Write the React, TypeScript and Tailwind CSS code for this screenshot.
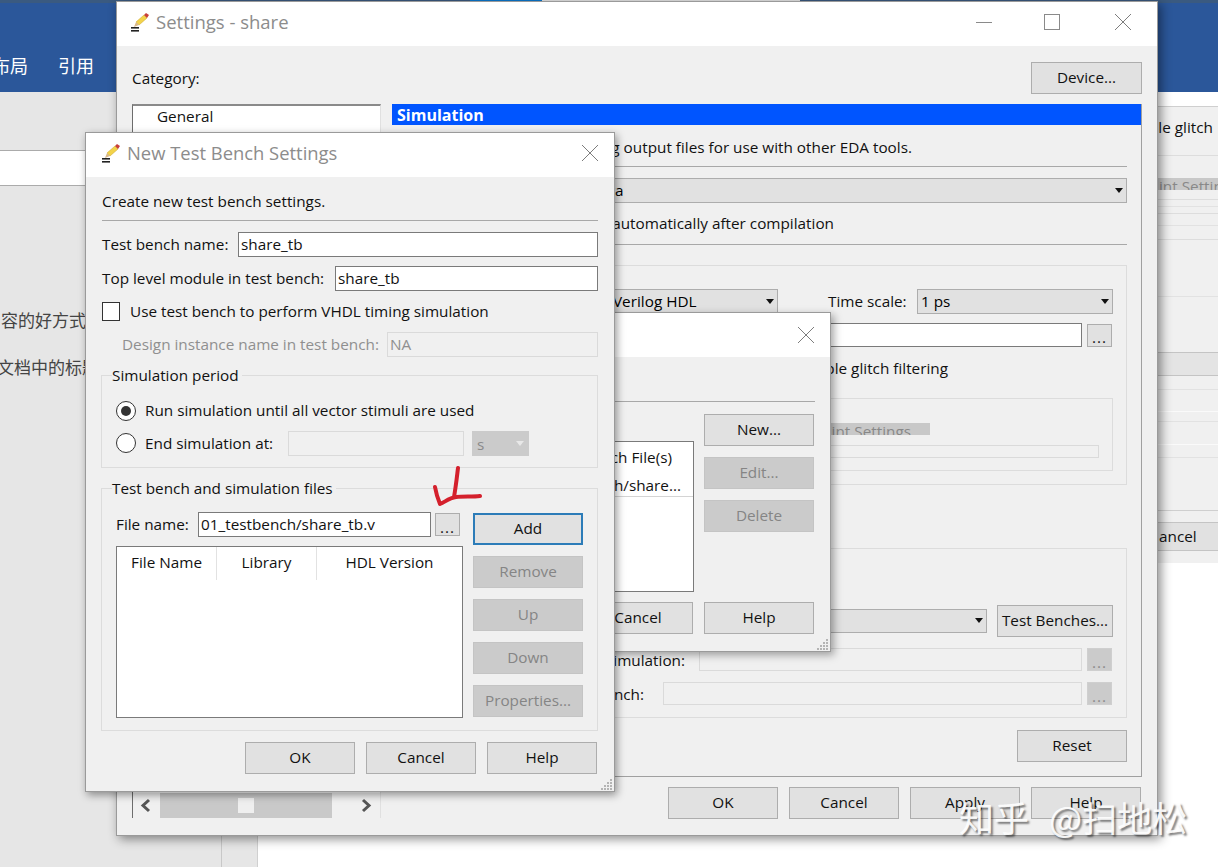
import React from "react";
import clsx from "clsx";

const Arrow = ({ color = "#111" }: { color?: string }) => (
  <svg width="8" height="5" viewBox="0 0 8 5" className="shrink-0"><polygon points="0,0 8,0 4,5" fill={color} /></svg>
);

const Btn = ({ children, disabled, focused, className }: { children: React.ReactNode; disabled?: boolean; focused?: boolean; className?: string }) => (
  <div
    className={clsx(
      "flex h-[32px] w-[110px] shrink-0 items-center justify-center whitespace-nowrap pb-[2px]",
      focused ? "border-2 border-[#2c7cb8] bg-[#e1e1e1] text-[#111]" : "border",
      !focused && (disabled ? "border-[#c4c4c4] bg-[#cbcbcb] text-[#858585]" : "border-[#adadad] bg-[#e1e1e1] text-[#111]"),
      className
    )}
  >
    {children}
  </div>
);

const Input = ({ value, className, disabled }: { value?: string; className?: string; disabled?: boolean }) => (
  <div
    className={clsx(
      "flex shrink-0 items-center overflow-hidden whitespace-nowrap border pb-[1px] pl-[2px]",
      disabled ? "border-[#dadada] bg-[#f0f0f0] text-[#8f8f8f]" : "border-[#7a7a7a] bg-white text-[#111]",
      className
    )}
  >
    {value}
  </div>
);

const Select = ({ value, className }: { value?: string; className?: string }) => (
  <div className={clsx("flex shrink-0 items-center justify-between overflow-hidden whitespace-nowrap border border-[#adadad] bg-[#e1e1e1] pb-[1px] pl-[3px] pr-[3px]", className)}>
    <span>{value}</span>
    <Arrow />
  </div>
);

const Dots = ({ disabled }: { disabled?: boolean }) => (
  <div
    className={clsx(
      "flex h-[23px] w-[25px] shrink-0 items-center justify-center border pt-[6px] leading-none tracking-[1px]",
      disabled ? "border-[#cfcfcf] bg-[#cbcbcb] text-[#8a8a8a]" : "border-[#adadad] bg-[#e1e1e1] text-[#111]"
    )}
  >
    ...
  </div>
);

const Pencil = () => (
  <svg width="18" height="19" viewBox="0 0 18 19" className="shrink-0">
    <polygon points="5,9 13,2 16,5 8,12" fill="#f3d34a" stroke="#c9a227" strokeWidth="0.5" />
    <polygon points="13,2 15,0 18,2 16,5" fill="#c8403a" />
    <polygon points="5,9 8,12 3,14" fill="#d9b98a" />
    <rect x="0" y="14" width="8" height="1.6" fill="#222" />
    <rect x="0" y="17" width="8" height="1.6" fill="#222" />
  </svg>
);

const Close = () => (
  <svg width="18" height="18" viewBox="0 0 18 18" className="shrink-0">
    <path d="M1 1 L17 17 M17 1 L1 17" stroke="#7d7d7d" strokeWidth="1" fill="none" />
  </svg>
);

const Grip = () => (
  <svg width="12" height="12" viewBox="0 0 12 12" className="absolute bottom-[1px] right-[1px]">
    {[[9, 1], [6, 4], [9, 4], [3, 7], [6, 7], [9, 7], [0, 10], [3, 10], [6, 10], [9, 10]].map(([x, y], i) => (
      <rect key={i} x={x} y={y} width="2" height="2" fill="#b4b4b4" />
    ))}
  </svg>
);

const Group = ({ legend, className, children }: { legend?: string; className?: string; children: React.ReactNode }) => (
  <div className={clsx("relative border border-[#dcdcdc]", className)}>
    {legend && <div className="absolute left-[10px] top-[-11px] whitespace-nowrap bg-[#f0f0f0] pr-[3px] text-[#111]">{legend}</div>}
    {children}
  </div>
);

const Backdrop = () => (
  <div className="absolute inset-0 flex flex-col bg-white">
    <div className="flex h-[92px] shrink-0 flex-col bg-[#2b579a]">
      <div className="flex h-[3px] shrink-0">
        <div className="w-[470px] bg-[#3a5a80]" />
        <div className="w-[72px] bg-[#0a78d0]" />
        <div className="w-[258px] bg-[#e8e8e8]" />
        <div className="flex-1 bg-[#3a5a80]" />
      </div>
      <div className="flex gap-[30px] pt-[50px] text-[18px] leading-[26px] text-white">
        <span className="-ml-[8px]">布局</span>
        <span>引用</span>
      </div>
    </div>
    <div className="flex flex-1">
      <div className="w-[222px] shrink-0 border-r border-[#c8c8c8] bg-[#e6e6e6] text-[17px] leading-[24px] text-[#444]">
        <div className="mt-[58px] h-[36px] border-y border-[#ababab] bg-white" />
        <div className="ml-[1px] mt-[123px]">容的好方式</div>
        <div className="-ml-[3px] mt-[23px]">文档中的标题</div>
      </div>
      <div className="w-[36px] shrink-0 border-r border-[#d0d0d0] bg-[#e6e6e6]" />
      <div className="flex-1" />
      <div className="flex w-[60px] shrink-0 flex-col">
        <div className="h-[14px] bg-white" />
        <div className="flex h-[457px] flex-col overflow-hidden border-t border-[#cfcfcf] bg-[#f0f0f0]">
          <div className="-ml-[9px] mt-[9px] whitespace-nowrap leading-[22px] text-[#111]">ble glitch</div>
          <div className="mt-[17px] border-t border-[#dddddd]" />
          <div className="mt-[22px] h-[12px] overflow-hidden whitespace-nowrap bg-[#c8c8c8] pl-[1px] leading-[16px] text-[#888]">int Settings</div>
          <div className="mt-[9px] border-t border-[#dddddd]" />
          <div className="mt-[6px] border-t border-[#e2e2e2]" />
          <div className="mt-[6px] border-t border-[#dddddd]" />
          <div className="mt-[11px] border-t border-[#e2e2e2]" />
          <div className="mt-[13px] border-t border-[#dddddd]" />
          <div className="mt-[56px] border-t border-[#e2e2e2]" />
          <div className="mt-[55px] h-[24px] border-y border-[#c4c4c4] bg-[#e4e4e4]" />
          <div className="mt-[13px] border-t border-[#e2e2e2]" />
          <div className="mt-[21px] border-t border-[#fafafa]" />
          <div className="mt-[9px] border-t border-[#e2e2e2]" />
          <div className="mt-[22px] border-t border-[#fafafa]" />
          <div className="mt-[12px] border-t border-[#e2e2e2]" />
          <div className="mt-[52px] border-t border-[#cfcfcf]" />
          <div className="mt-[11px] flex h-[29px] items-center overflow-hidden whitespace-nowrap border-y border-[#c4c4c4] bg-[#e1e1e1] pb-[1px] pl-[1px] text-[#111]">
            ancel
          </div>
        </div>
      </div>
    </div>
  </div>
);

const Settings = () => (
  <div className="absolute left-[116px] top-[1px] flex h-[835px] w-[1042px] flex-col border border-[#9a9a9a] bg-[#f0f0f0] shadow-[3px_3px_10px_rgba(0,0,0,0.45)]">
    <div className="flex h-[44px] shrink-0 items-center bg-white pb-[4px] pl-[14px] pr-[25px]">
      <Pencil />
      <span className="ml-[7px] text-[18.5px] text-[#8c8c8c]">Settings - share</span>
      <div className="ml-auto flex items-center">
        <div className="h-px w-[16px] bg-[#8a8a8a]" />
        <div className="ml-[52px] h-[16px] w-[16px] border border-[#8a8a8a]" />
        <div className="ml-[54px]"><Close /></div>
      </div>
    </div>
    <div className="flex flex-1 flex-col px-[15px] pt-[16px]">
      <div className="mb-[10px] flex h-[32px] w-[1010px] items-center justify-between">
        <span className="pb-[1px] text-[#111]">Category:</span>
        <Btn className="w-[111px]">Device...</Btn>
      </div>
      <div className="flex gap-[11px]">
        <div className="flex h-[714px] w-[249px] shrink-0 flex-col border-l border-r border-t-2 border-l-[#6d6d6d] border-r-[#e0e0e0] border-t-[#8a8a8a] bg-white">
          <div className="pl-[24px] leading-[21px] text-[#111]">General</div>
          <div className="mt-auto flex h-[25px] items-center bg-[#f0f0f0]">
            <svg width="27" height="25" viewBox="0 0 27 25" className="shrink-0">
              <path d="M16 7 L10 12.5 L16 18" stroke="#555" strokeWidth="3" fill="none" />
            </svg>
            <div className="relative h-full w-[172px] shrink-0 bg-[#c9c9c9]">
              <div className="absolute left-[78px] top-[5px] h-[15px] w-[16px] bg-[#efefef]" />
            </div>
            <svg width="48" height="25" viewBox="0 0 48 25" className="shrink-0">
              <path d="M31 7 L37 12.5 L31 18" stroke="#555" strokeWidth="3" fill="none" />
            </svg>
          </div>
        </div>
        <div className="flex flex-col">
          <div className="flex h-[673px] w-[750px] flex-col border-b border-r border-[#a0a0a0]">
            <div className="flex h-[21px] shrink-0 items-center bg-[#0055ff] pl-[5px] text-[16px] font-bold text-white">Simulation</div>
            <div className="flex flex-col pl-[8px] pr-[14px]">
              <div className="-ml-[3px] mt-[12px] flex h-[20px] w-[515px] items-center justify-end whitespace-nowrap text-[#111]">
                Specify options for generating output files for use with other EDA tools.
              </div>
              <div className="mt-[9px] border-t border-[#a8a8a8]" />
              <div className="mt-[11px] flex h-[25px] items-center justify-between">
                <span>Tool name:</span>
                <Select value="ModelSim-Altera" className="h-[25px] w-[626px]" />
              </div>
              <div className="-ml-[3px] mt-[10px] flex h-[20px] w-[437px] items-center justify-end whitespace-nowrap text-[#111]">
                Run gate-level simulation automatically after compilation
              </div>
              <div className="mt-[11px] border-t border-[#a8a8a8]" />
              <Group legend="EDA Netlist Writer settings" className="mt-[20px] h-[220px] pr-[13px] pt-[23px]">
                <div className="flex h-[25px] items-center">
                  <Select value="Verilog HDL" className="ml-[208px] h-[25px] w-[169px]" />
                  <div className="ml-[50px] flex flex-1 items-center justify-between">
                    <span className="pb-[1px] text-[#111]">Time scale:</span>
                    <Select value="1 ps" className="h-[25px] w-[196px]" />
                  </div>
                </div>
                <div className="mt-[9px] flex h-[24px] items-center justify-end gap-[5px] pr-[1px]">
                  <Input className="h-[24px] flex-1" />
                  <Dots />
                </div>
                <div className="mt-[11px] flex h-[20px] items-center justify-end whitespace-nowrap pr-[165px] text-[#111]">Enable glitch filtering</div>
                <Group className="ml-[14px] mt-[20px] h-[73px] pr-[13px] pt-[24px]">
                  <div className="mr-[169px] flex h-[12px] justify-end overflow-hidden whitespace-nowrap bg-[#c8c8c8] pr-[19px] leading-[16px] text-[#888]">Constraint Settings</div>
                  <div className="mt-[10px] h-[13px] border border-[#dadada] bg-[#f0f0f0]" />
                </Group>
              </Group>
              <Group legend="NativeLink settings" className="mt-[63px] h-[170px] pr-[13px] pt-[56px]">
                <div className="flex h-[31px] items-center justify-end gap-[10px]">
                  <Select className="h-[24px] flex-1" />
                  <Btn className="w-[116px]">Test Benches...</Btn>
                </div>
                <div className="mt-[12px] flex h-[23px] items-center justify-end whitespace-nowrap pr-[1px] text-[#111]">
                  Use script to set up simulation:
                  <Input disabled className="ml-[14px] h-[23px] w-[383px]" />
                  <div className="ml-[5px]"><Dots disabled /></div>
                </div>
                <div className="mt-[11px] flex h-[23px] items-center justify-end whitespace-nowrap pr-[1px] text-[#111]">
                  Script to compile test bench:
                  <Input disabled className="ml-[19px] h-[23px] w-[419px]" />
                  <div className="ml-[5px]"><Dots disabled /></div>
                </div>
              </Group>
              <div className="mt-[12px] flex justify-end">
                <Btn>Reset</Btn>
              </div>
            </div>
          </div>
          <div className="mt-[10px] flex justify-end gap-[11px] pr-[1px]">
            <Btn>OK</Btn>
            <Btn>Cancel</Btn>
            <Btn>Apply</Btn>
            <Btn>Help</Btn>
          </div>
        </div>
      </div>
    </div>
  </div>
);

const TestBenches = () => (
  <div className="absolute left-[300px] top-[312px] flex h-[340px] w-[531px] flex-col border border-[#9a9a9a] bg-[#f0f0f0] shadow-[3px_3px_8px_rgba(0,0,0,0.35)]">
    <div className="flex h-[44px] shrink-0 items-center justify-end bg-white pr-[15px]">
      <Close />
    </div>
    <div className="flex flex-col pl-[15px] pr-[15px]">
      <div className="mt-[44px] border-t border-[#a8a8a8]" />
      <div className="mt-[12px] flex justify-between">
        <div className="flex w-[378px] flex-col pt-[27px]">
          <div className="flex h-[151px] flex-col border border-[#7a7a7a] bg-white">
            <div className="flex h-[29px] shrink-0 items-center justify-end whitespace-nowrap pr-[21px] text-[#111]">Test Bench File(s)</div>
            <div className="flex h-[26px] shrink-0 items-center justify-end whitespace-nowrap border-b border-[#d4d4d4] pt-[2px] pr-[12px] text-[#111]">01_testbench/share...</div>
          </div>
          <div className="mt-[10px] flex justify-end gap-[11px] pr-[1px]">
            <Btn>OK</Btn>
            <Btn>Cancel</Btn>
          </div>
        </div>
        <div className="mr-[1px] flex w-[110px] flex-col gap-[11px]">
          <Btn>New...</Btn>
          <Btn disabled>Edit...</Btn>
          <Btn disabled>Delete</Btn>
          <Btn className="mt-auto">Help</Btn>
        </div>
      </div>
    </div>
    <Grip />
  </div>
);

const Radio = ({ checked, className }: { checked?: boolean; className?: string }) => (
  <div className={clsx("flex h-[20px] w-[20px] shrink-0 items-center justify-center rounded-full border border-[#333] bg-white", className)}>
    {checked && <div className="h-[10px] w-[10px] rounded-full bg-[#333]" />}
  </div>
);

const NewTestBench = () => (
  <div className="absolute left-[85px] top-[132px] flex h-[660px] w-[530px] flex-col border border-[#9a9a9a] bg-[#f0f0f0] shadow-[2px_3px_8px_rgba(0,0,0,0.4)]">
    <div className="flex h-[44px] shrink-0 items-center bg-white pb-[4px] pl-[16px] pr-[15px]">
      <Pencil />
      <span className="ml-[7px] text-[18.4px] text-[#8c8c8c]">New Test Bench Settings</span>
      <div className="ml-auto"><Close /></div>
    </div>
    <div className="flex flex-col pl-[16px] pr-[16px] text-[#111]">
      <div className="mt-[14px] pb-[1px] leading-[21px]">Create new test bench settings.</div>
      <div className="mt-[7px] border-t border-[#a8a8a8]" />
      <div className="mt-[11px] flex h-[25px] items-center justify-between">
        <span className="pb-[1px]">Test bench name:</span>
        <Input value="share_tb" className="h-[25px] w-[360px]" />
      </div>
      <div className="mt-[9px] flex h-[25px] items-center justify-between">
        <span className="pb-[1px]">Top level module in test bench:</span>
        <Input value="share_tb" className="h-[25px] w-[263px]" />
      </div>
      <div className="mt-[10px] flex h-[20px] items-center gap-[10px]">
        <div className="h-[19px] w-[18px] shrink-0 border border-[#333] bg-white" />
        <span>Use test bench to perform VHDL timing simulation</span>
      </div>
      <div className="mt-[11px] flex h-[25px] items-center justify-between pl-[20px]">
        <span className="pb-[1px] text-[#8f8f8f]">Design instance name in test bench:</span>
        <Input disabled value="NA" className="h-[25px] w-[211px]" />
      </div>
      <Group legend="Simulation period" className="-ml-[1px] mt-[18px] h-[93px] pl-[14px] pt-[22px]">
        <div className="flex h-[25px] items-center gap-[9px]">
          <Radio checked />
          <span className="pb-[1px]">Run simulation until all vector stimuli are used</span>
        </div>
        <div className="mt-[8px] flex h-[25px] items-center">
          <Radio className="-mt-[1px]" />
          <span className="ml-[9px] w-[143px] pb-[1px]">End simulation at:</span>
          <Input disabled className="h-[25px] w-[176px]" />
          <div className="ml-[8px] flex h-[25px] w-[57px] items-center justify-between bg-[#cbcbcb] pl-[5px] pr-[5px] text-[#8a8a8a]">
            <span>s</span>
            <Arrow color="#e8e8e8" />
          </div>
        </div>
      </Group>
      <Group legend="Test bench and simulation files" className="-ml-[1px] mt-[20px] h-[243px] pl-[14px]">
        <div className="flex gap-[10px]">
          <div className="flex w-[347px] flex-col pt-[23px]">
            <div className="flex h-[25px] items-center">
              <span className="w-[82px] pb-[1px]">File name:</span>
              <Input value="01_testbench/share_tb.v" className="h-[25px] w-[233px]" />
              <div className="ml-[4px]"><Dots /></div>
            </div>
            <div className="mt-[9px] h-[172px] border border-[#7a7a7a] bg-white">
              <div className="flex h-[33px] items-center">
                <div className="flex h-full w-[100px] items-center justify-center border-r border-[#e2e2e2] pb-[3px]">File Name</div>
                <div className="flex h-full w-[100px] items-center justify-center border-r border-[#e2e2e2] pb-[3px]">Library</div>
                <div className="flex h-full flex-1 items-center justify-center pb-[3px]">HDL Version</div>
              </div>
            </div>
          </div>
          <div className="flex w-[110px] flex-col gap-[11px] pt-[24px]">
            <Btn focused>Add</Btn>
            <Btn disabled>Remove</Btn>
            <Btn disabled>Up</Btn>
            <Btn disabled>Down</Btn>
            <Btn disabled>Properties...</Btn>
          </div>
        </div>
      </Group>
      <div className="mt-[11px] flex justify-end gap-[11px] pr-[1px]">
        <Btn>OK</Btn>
        <Btn>Cancel</Btn>
        <Btn>Help</Btn>
      </div>
    </div>
    <Grip />
  </div>
);

export default function App() {
  return (
    <div className="relative h-[867px] w-[1218px] overflow-hidden bg-white text-[15.3px] leading-[20px] [font-family:'Open_Sans','Noto_Sans_CJK_SC',sans-serif]">
      <Backdrop />
      <Settings />
      <TestBenches />
      <NewTestBench />
      <svg width="52" height="42" viewBox="0 0 52 42" className="absolute left-[432px] top-[466px]">
        <path d="M26 2 C25 10 24 20 22 31 M3 21 C4 27 6 33 8 38 C13 36 17 32 24 31 C32 30 40 31 48 30" stroke="#d4202c" strokeWidth="4" fill="none" strokeLinecap="round" strokeLinejoin="round" />
      </svg>
      <div className="absolute left-[959px] top-[793px] flex whitespace-nowrap text-[35px] leading-[48px] text-[rgba(255,255,255,0.92)] [font-family:'Noto_Sans_CJK_SC',sans-serif] [text-shadow:2px_2px_2px_rgba(0,0,0,0.5)]">
        <span>知乎</span>
        <span className="ml-[20px]">@扫地松</span>
      </div>
    </div>
  );
}
